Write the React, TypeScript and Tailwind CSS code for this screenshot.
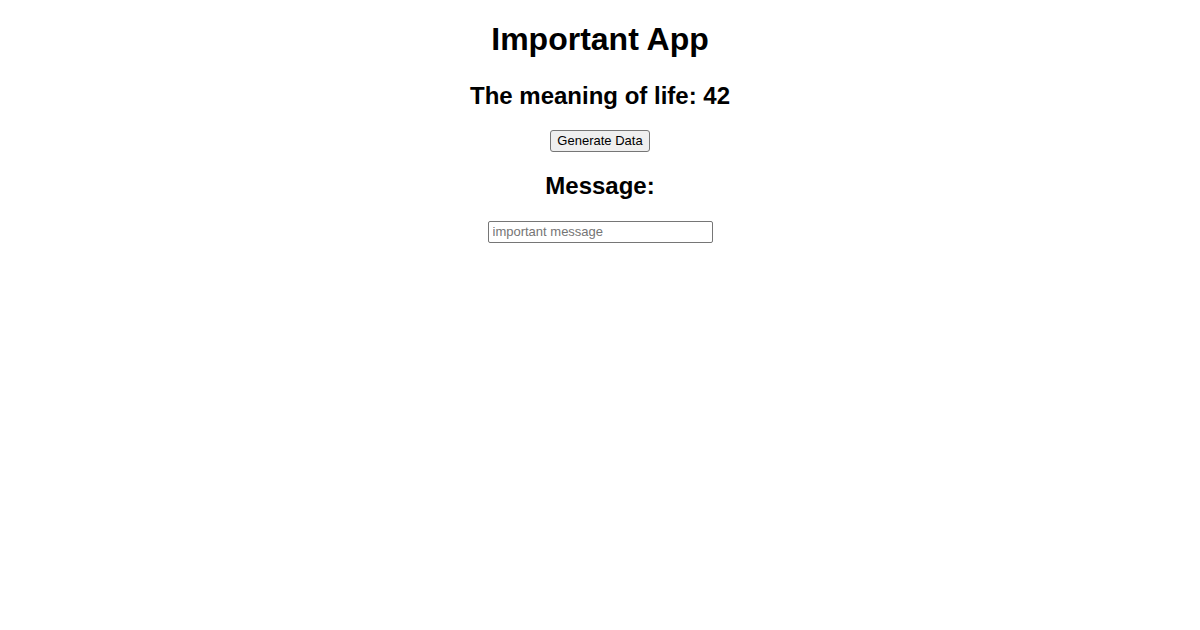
export default function App() {
  return (
    <div className="min-h-[630px] bg-white text-center text-black font-['Liberation_Sans',Arial,sans-serif] text-[16px] leading-[normal]">
      <div className="pt-[21.44px]">
        <h1 className="text-[32px] font-bold leading-[normal]">Important App</h1>
        <h2 className="mt-[24px] text-[24px] font-bold leading-[normal]">The meaning of life: 42</h2>
        <div className="mt-[20px] h-[22px]">
          <button
            type="button"
            className="h-[22px] rounded-[3px] border border-[#767676] bg-[#efefef] px-[6px] text-[13px] leading-[18px] text-black"
          >
            Generate Data
          </button>
        </div>
        <h2 className="mt-[20px] text-[24px] font-bold leading-[normal]">Message:</h2>
        <div className="mt-[20.5px] leading-none">
          <input
            type="text"
            placeholder="important message"
            className="h-[22px] w-[225px] rounded-[2px] border border-[#767676] bg-white pl-[4px] pr-[3px] text-left text-[13px] text-black placeholder:text-[#757575] outline-none"
          />
        </div>
      </div>
    </div>
  )
}
